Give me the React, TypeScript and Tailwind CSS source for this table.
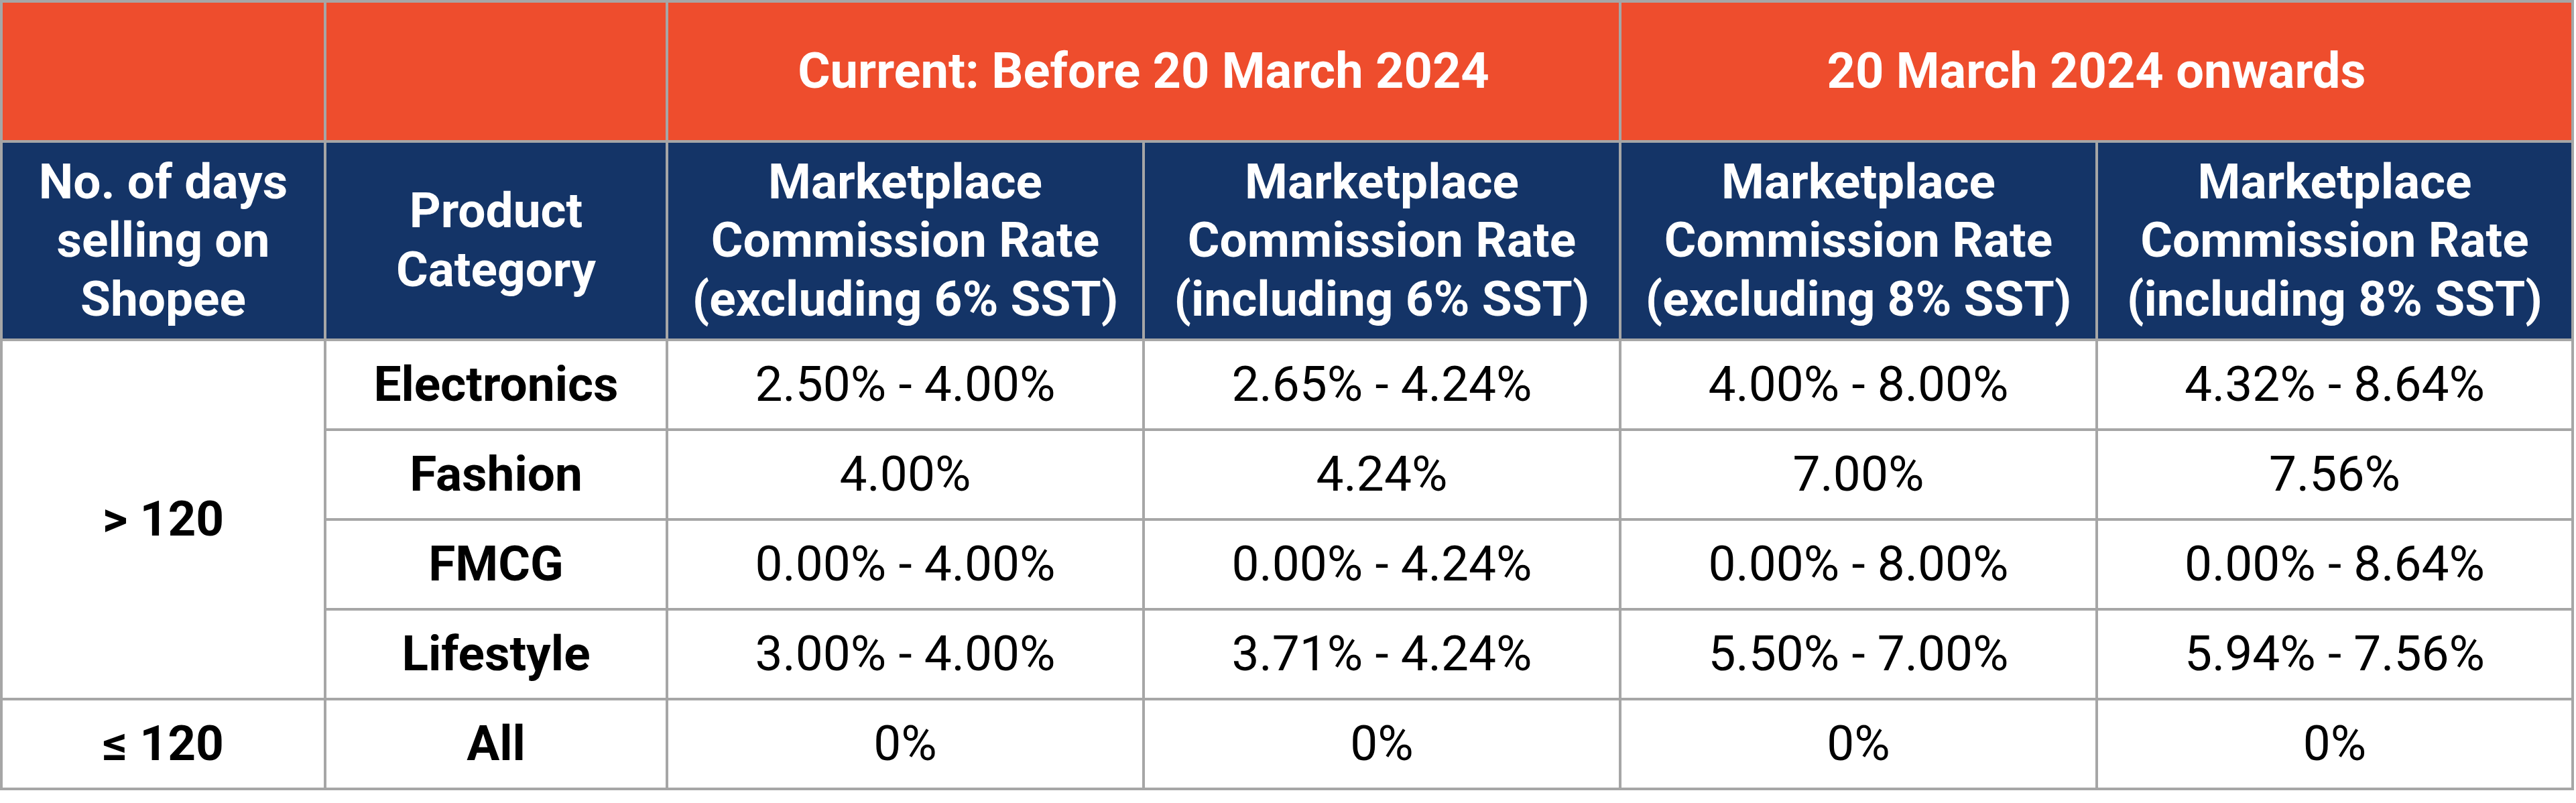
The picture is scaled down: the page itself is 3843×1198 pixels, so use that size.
import React from 'react';

const rows = [
    { cat: 'Electronics', vals: ['2.50% - 4.00%', '2.65% - 4.24%', '4.00% - 8.00%', '4.32% - 8.64%'] },
    { cat: 'Fashion', vals: ['4.00%', '4.24%', '7.00%', '7.56%'] },
    { cat: 'FMCG', vals: ['0.00% - 4.00%', '0.00% - 4.24%', '0.00% - 8.00%', '0.00% - 8.64%'] },
    { cat: 'Lifestyle', vals: ['3.00% - 4.00%', '3.71% - 4.24%', '5.50% - 7.00%', '5.94% - 7.56%'] },
];

const subHeads = [
    '(excluding 6% SST)',
    '(including 6% SST)',
    '(excluding 8% SST)',
    '(including 8% SST)',
];

const cell = 'flex items-center justify-center text-center';

function App() {
    return (
        <div className="min-h-screen bg-white font-['Roboto',sans-serif] text-[73px] leading-[1.2]">
            <div className="grid w-fit gap-[4px] bg-[#a6a6a6] p-[4px] grid-cols-[479px_506px_707px_707px_707px_706px] grid-rows-[205px_292px_repeat(5,130px)]">
                {/* top orange band */}
                <div className="bg-[#ee4d2d]" />
                <div className="bg-[#ee4d2d]" />
                <div className={`${cell} col-span-2 bg-[#ee4d2d] text-[74px] font-bold text-white`}>Current: Before 20 March 2024</div>
                <div className={`${cell} col-span-2 bg-[#ee4d2d] text-[74px] font-bold text-white`}>20 March 2024 onwards</div>

                {/* navy header */}
                <div className={`${cell} bg-[#143467] font-bold text-white`}>
                    No. of days<br />selling on<br />Shopee
                </div>
                <div className={`${cell} bg-[#143467] font-bold text-white`}>
                    Product<br />Category
                </div>
                {subHeads.map((s) => (
                    <div key={s} className={`${cell} bg-[#143467] font-bold text-white`}>
                        Marketplace<br />Commission Rate<br />{s}
                    </div>
                ))}

                {/* body */}
                <div className={`${cell} row-span-4 bg-white font-bold text-black`}>&gt; 120</div>
                {rows.map((r) => (
                    <React.Fragment key={r.cat}>
                        <div className={`${cell} bg-white font-bold text-black`}>{r.cat}</div>
                        {r.vals.map((v, i) => (
                            <div key={i} className={`${cell} bg-white text-black`}>{v}</div>
                        ))}
                    </React.Fragment>
                ))}

                <div className={`${cell} bg-white font-bold text-black`}>≤ 120</div>
                <div className={`${cell} bg-white font-bold text-black`}>All</div>
                {[0, 1, 2, 3].map((i) => (
                    <div key={i} className={`${cell} bg-white text-black`}>0%</div>
                ))}
            </div>
        </div>
    );
}

export default App;
